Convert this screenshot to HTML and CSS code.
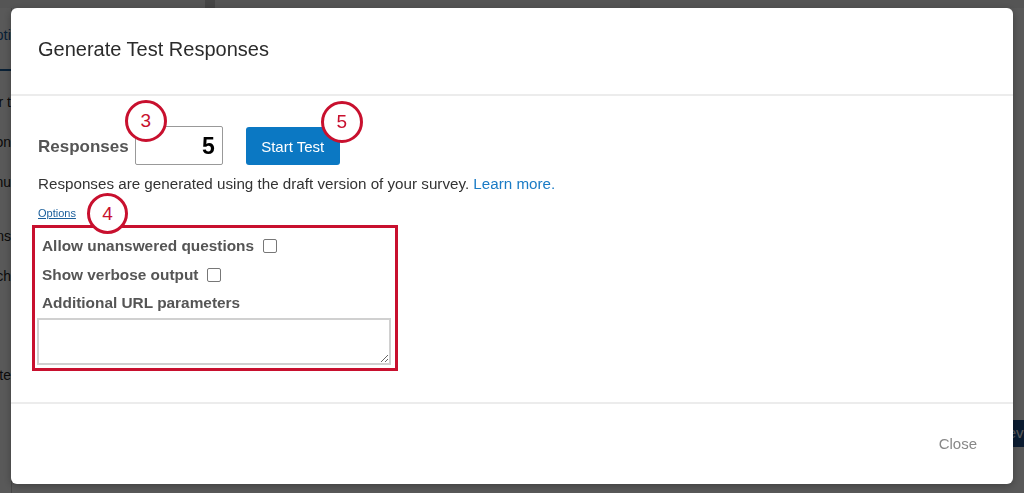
FILE: index.html
```html
<!DOCTYPE html>
<html lang="en">
<head>
    <meta charset="UTF-8">
    <title>Generate Test Responses</title>
    <link rel="stylesheet" href="styles.css">
</head>
<body>
    <div class="page">
        <div class="topbar"></div>
        <div class="page-main">
            <aside class="sidebar">
                <div class="side-tab">Survey opti</div>
                <div class="side-item first">Filter t</div>
                <div class="side-item">Questi on</div>
                <div class="side-item">Menu</div>
                <div class="side-item gap">Questions</div>
                <div class="side-item">Search</div>
                <div class="side-item last">Delete</div>
            </aside>
            <main class="content">
                <div class="preview-btn">Preview</div>
            </main>
        </div>
    </div>

    <div class="backdrop"></div>

    <div class="modal">
        <div class="modal-header">
            <h1>Generate Test Responses</h1>
        </div>

        <div class="modal-body">
            <div class="responses-row">
                <label class="responses-label" for="count">Responses</label>
                <div class="marked">
                    <input id="count" class="count-input" type="text" value="5">
                    <span class="callout callout-3">3</span>
                </div>
                <div class="marked">
                    <button class="btn-start">Start Test</button>
                    <span class="callout callout-5">5</span>
                </div>
            </div>

            <p class="note">Responses are generated using the draft version of your survey. <a href="#">Learn more.</a></p>

            <div class="marked options-line">
                <a href="#" class="options-link">Options</a>
                <span class="callout callout-4">4</span>
            </div>

            <div class="options-box">
                <label class="opt">Allow unanswered questions <span class="check"></span></label>
                <label class="opt">Show verbose output <span class="check"></span></label>
                <div class="opt">Additional URL parameters</div>
                <textarea class="url-params"></textarea>
            </div>
        </div>

        <div class="modal-footer">
            <a href="#" class="btn-close">Close</a>
        </div>
    </div>
</body>
</html>
```

FILE: styles.css
```css
* {
    margin: 0;
    padding: 0;
    box-sizing: border-box;
}

html, body {
    width: 1024px;
    height: 493px;
    overflow: hidden;
}

body {
    font-family: 'Liberation Sans', Arial, sans-serif;
    background: #fff;
    color: #333;
}

/* underlying page */
.page {
    height: 100%;
    display: flex;
    flex-direction: column;
}

.topbar {
    height: 8px;
    background: linear-gradient(90deg, #f4f4f4 0 205px, #c8c8c8 205px 215px, #f4f4f4 215px 630px, #d8d8d8 630px 640px, #f4f4f4 640px);
}

.page-main {
    flex: 1;
    display: flex;
}

.sidebar {
    width: 12px;
    overflow: hidden;
    font-size: 14px;
    color: #222;
    border-right: 1px solid #ccc;
}

.side-tab,
.side-item {
    display: flex;
    justify-content: flex-end;
    white-space: nowrap;
    height: 20px;
    line-height: 20px;
}

.side-tab {
    color: #1a5e9b;
    margin-top: 17px;
    padding-bottom: 24px;
    border-bottom: 2px solid #1a5e9b;
    height: 46px;
    font-size: 15px;
}

.side-item.first {
    margin-top: 21px;
}

.side-item {
    margin-top: 20px;
}

.side-item.gap {
    margin-top: 34px;
}

.side-item.last {
    margin-top: 79px;
}

.content {
    flex: 1;
    display: flex;
    flex-direction: column;
    align-items: flex-end;
}

.preview-btn {
    margin-top: 412px;
    margin-right: -36px;
    background: #1f4f8a;
    color: #fff;
    font-size: 15px;
    padding: 4px 14px;
    height: 27px;
}

.backdrop {
    position: fixed;
    inset: 0;
    background: rgba(0, 0, 0, 0.65);
}

/* dialog */
.modal {
    position: fixed;
    top: 8px;
    left: 11px;
    width: 1002px;
    height: 476px;
    background: #fff;
    border-radius: 6px;
    display: flex;
    flex-direction: column;
    box-shadow: 0 2px 8px rgba(0, 0, 0, 0.3);
}

.modal-header {
    height: 88px;
    padding: 30px 27px 0;
    border-bottom: 2px solid #ececec;
}

.modal-header h1 {
    font-size: 20px;
    font-weight: 400;
    color: #2b2b2b;
}

.modal-body {
    flex: 1;
    padding: 30px 27px 0;
    position: relative;
}

.responses-row {
    display: flex;
    align-items: center;
}

.responses-label {
    font-size: 17px;
    font-weight: 700;
    color: #555;
    margin-right: 6px;
    margin-top: 2px;
}

.marked {
    position: relative;
}

.count-input {
    display: block;
    width: 88px;
    height: 39px;
    border: 1px solid #999;
    border-radius: 2px;
    font-family: inherit;
    font-size: 23px;
    font-weight: 700;
    color: #000;
    text-align: right;
    padding-right: 7px;
    padding-top: 2px;
}

.btn-start {
    display: block;
    margin-left: 23px;
    width: 94px;
    height: 38px;
    background: #0b78c3;
    border: none;
    border-radius: 3px;
    color: #fff;
    font-family: inherit;
    font-size: 15px;
    margin-top: 1px;
}

.callout {
    position: absolute;
    width: 42px;
    height: 42px;
    border: 3px solid #c8102e;
    border-radius: 50%;
    background: #fff;
    color: #c8102e;
    font-size: 19px;
    line-height: 36px;
    text-align: center;
}

.callout-3 {
    top: -26px;
    left: -10px;
}

.callout-5 {
    top: -25px;
    right: -23px;
}

.note {
    font-size: 15.2px;
    color: #333;
    margin-top: 10px;
}

.note a {
    color: #1a7bc5;
    text-decoration: none;
}

.options-line {
    display: inline-block;
    margin-top: 11px;
}

.options-link {
    font-size: 11px;
    color: #1a5e9b;
}

.callout-4 {
    top: -10px;
    left: 49px;
    width: 41px;
    height: 41px;
    line-height: 35px;
}

.options-box {
    margin: 4px 0 0 -6px;
    width: 366px;
    height: 146px;
    border: 3px solid #c8102e;
    padding: 4px 3px 0 7px;
}

.opt {
    display: flex;
    align-items: center;
    font-size: 15.4px;
    font-weight: 700;
    color: #555;
    height: 28.5px;
}

.check {
    display: inline-block;
    width: 14px;
    height: 14px;
    border: 1px solid #777;
    border-radius: 2px;
    margin-left: 9px;
}

.url-params {
    display: block;
    margin: 0 0 0 -5px;
    width: 354px;
    height: 47px;
    border: 2px solid #d0d0d0;
    resize: both;
}

.modal-footer {
    height: 82px;
    border-top: 2px solid #ececec;
    display: flex;
    align-items: center;
    justify-content: flex-end;
    padding-right: 36px;
}

.btn-close {
    font-size: 15px;
    color: #888;
    text-decoration: none;
    margin-top: -2px;
}
```
